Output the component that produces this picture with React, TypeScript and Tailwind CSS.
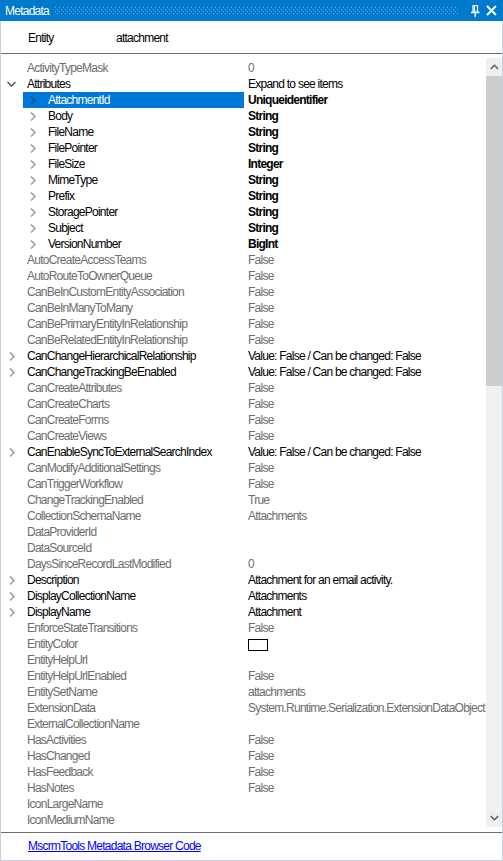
type Kind = "gray" | "exp" | "child";

interface Row {
  name: string;
  value?: string;
  kind: Kind;
  expanded?: boolean;
  selected?: boolean;
  swatch?: boolean;
}

const rows: Row[] = [
  { name: "ActivityTypeMask", value: "0", kind: "gray" },
  { name: "Attributes", value: "Expand to see items", kind: "exp", expanded: true },
  { name: "AttachmentId", value: "Uniqueidentifier", kind: "child", selected: true },
  { name: "Body", value: "String", kind: "child" },
  { name: "FileName", value: "String", kind: "child" },
  { name: "FilePointer", value: "String", kind: "child" },
  { name: "FileSize", value: "Integer", kind: "child" },
  { name: "MimeType", value: "String", kind: "child" },
  { name: "Prefix", value: "String", kind: "child" },
  { name: "StoragePointer", value: "String", kind: "child" },
  { name: "Subject", value: "String", kind: "child" },
  { name: "VersionNumber", value: "BigInt", kind: "child" },
  { name: "AutoCreateAccessTeams", value: "False", kind: "gray" },
  { name: "AutoRouteToOwnerQueue", value: "False", kind: "gray" },
  { name: "CanBeInCustomEntityAssociation", value: "False", kind: "gray" },
  { name: "CanBeInManyToMany", value: "False", kind: "gray" },
  { name: "CanBePrimaryEntityInRelationship", value: "False", kind: "gray" },
  { name: "CanBeRelatedEntityInRelationship", value: "False", kind: "gray" },
  { name: "CanChangeHierarchicalRelationship", value: "Value: False / Can be changed: False", kind: "exp" },
  { name: "CanChangeTrackingBeEnabled", value: "Value: False / Can be changed: False", kind: "exp" },
  { name: "CanCreateAttributes", value: "False", kind: "gray" },
  { name: "CanCreateCharts", value: "False", kind: "gray" },
  { name: "CanCreateForms", value: "False", kind: "gray" },
  { name: "CanCreateViews", value: "False", kind: "gray" },
  { name: "CanEnableSyncToExternalSearchIndex", value: "Value: False / Can be changed: False", kind: "exp" },
  { name: "CanModifyAdditionalSettings", value: "False", kind: "gray" },
  { name: "CanTriggerWorkflow", value: "False", kind: "gray" },
  { name: "ChangeTrackingEnabled", value: "True", kind: "gray" },
  { name: "CollectionSchemaName", value: "Attachments", kind: "gray" },
  { name: "DataProviderId", kind: "gray" },
  { name: "DataSourceId", kind: "gray" },
  { name: "DaysSinceRecordLastModified", value: "0", kind: "gray" },
  { name: "Description", value: "Attachment for an email activity.", kind: "exp" },
  { name: "DisplayCollectionName", value: "Attachments", kind: "exp" },
  { name: "DisplayName", value: "Attachment", kind: "exp" },
  { name: "EnforceStateTransitions", value: "False", kind: "gray" },
  { name: "EntityColor", kind: "gray", swatch: true },
  { name: "EntityHelpUrl", kind: "gray" },
  { name: "EntityHelpUrlEnabled", value: "False", kind: "gray" },
  { name: "EntitySetName", value: "attachments", kind: "gray" },
  { name: "ExtensionData", value: "System.Runtime.Serialization.ExtensionDataObject", kind: "gray" },
  { name: "ExternalCollectionName", kind: "gray" },
  { name: "HasActivities", value: "False", kind: "gray" },
  { name: "HasChanged", value: "False", kind: "gray" },
  { name: "HasFeedback", value: "False", kind: "gray" },
  { name: "HasNotes", value: "False", kind: "gray" },
  { name: "IconLargeName", kind: "gray" },
  { name: "IconMediumName", kind: "gray" },
];

function ChevronRight({ selected }: { selected?: boolean }) {
  return (
    <svg width="6" height="9" viewBox="0 0 6 9">
      <path d="M1 0.5 L5 4.5 L1 8.5" fill="none" stroke={selected ? "#1f4f80" : "#9a9a9a"} strokeWidth="1.5" />
    </svg>
  );
}

function ChevronDown() {
  return (
    <svg width="9" height="6" viewBox="0 0 9 6">
      <path d="M0.5 1 L4.5 5 L8.5 1" fill="none" stroke="#555555" strokeWidth="1.5" />
    </svg>
  );
}

function TreeRow({ row }: { row: Row }) {
  const child = row.kind === "child";
  const nameColor = row.selected ? "text-white" : row.kind === "gray" ? "text-[#6d6d6d]" : "text-black";
  const valueClass = child ? "font-bold text-black" : row.kind === "gray" ? "text-[#6d6d6d]" : "text-black";

  return (
    <div className="flex h-4 items-center whitespace-nowrap">
      <div className={`flex h-full w-[247px] shrink-0 ${child ? "pl-[22px]" : "pl-[1px]"}`}>
        <div className={`mr-[4px] flex h-full flex-1 items-center ${row.selected ? "bg-[#0078d7]" : ""}`}>
          <span className={`flex w-[25px] shrink-0 items-center ${row.expanded ? "pl-[5px]" : "pl-[7px]"}`}>
            {row.expanded ? <ChevronDown /> : row.kind !== "gray" ? <ChevronRight selected={row.selected} /> : null}
          </span>
          <span className={nameColor}>{row.name}</span>
        </div>
      </div>
      <div className={`flex items-center ${valueClass}`}>
        {row.swatch ? <span className="mt-[1px] block h-[12px] w-[20px] border border-black bg-white" /> : row.value}
      </div>
    </div>
  );
}

function Scrollbar() {
  return (
    <div className="flex w-[16px] shrink-0 flex-col pt-[4px] pb-[5px]">
      <div className="flex h-[18px] items-center justify-center bg-[#f0f0f0]">
        <svg width="9" height="6" viewBox="0 0 9 6">
          <path d="M0.8 5 L4.5 1.3 L8.2 5" fill="none" stroke="#606060" strokeWidth="1.6" />
        </svg>
      </div>
      <div className="h-[310px] bg-[#cdcdcd]" />
      <div className="flex-1 bg-[#f0f0f0]" />
      <div className="flex h-[18px] items-center justify-center bg-[#f0f0f0]">
        <svg width="9" height="6" viewBox="0 0 9 6">
          <path d="M0.8 1 L4.5 4.7 L8.2 1" fill="none" stroke="#606060" strokeWidth="1.6" />
        </svg>
      </div>
    </div>
  );
}

export default function App() {
  return (
    <div className="flex h-[861px] w-[503px] flex-col bg-white font-['Liberation_Sans',Arial,sans-serif] text-[12px] tracking-[-0.75px]">
      <div className="flex h-[21px] shrink-0 items-center bg-[#007acc] pl-[5px] pr-[6px] text-white">
        <span className="leading-none">Metadata</span>
        <svg className="ml-[6px] mr-[10px] h-[8px] flex-1" preserveAspectRatio="none">
          <defs>
            <pattern id="grip" width="4" height="4" patternUnits="userSpaceOnUse">
              <rect x="0" y="0" width="1" height="1" fill="#5aaae6" />
              <rect x="2" y="2" width="1" height="1" fill="#5aaae6" />
            </pattern>
          </defs>
          <rect width="100%" height="100%" fill="url(#grip)" />
        </svg>
        <svg width="12" height="12" viewBox="0 0 12 12" className="mr-[5px]">
          <path d="M4 0.5 H8.5 V7 H4 Z M5.5 0.5 V7" fill="none" stroke="#ffffff" strokeWidth="1.2" />
          <path d="M2 7.5 H10.5 M6.2 7.5 V12" stroke="#ffffff" strokeWidth="1.4" />
        </svg>
        <svg width="11" height="11" viewBox="0 0 11 11">
          <path d="M1 1 L10 10 M10 1 L1 10" stroke="#ffffff" strokeWidth="2" />
        </svg>
      </div>

      <div className="flex flex-1 flex-col border-x border-b border-[#cccedb]">
        <div className="grid h-[32px] shrink-0 grid-cols-[88px_1fr] items-center pt-[2px] pl-[27px] text-black">
          <div>Entity</div>
          <div>attachment</div>
        </div>
        <div className="h-px shrink-0 bg-[#6e6e6e]" />

        <div className="flex h-[778px] shrink-0">
          <div className="flex-1 overflow-hidden pt-[6px]">
            {rows.map((r) => (
              <TreeRow key={r.name} row={r} />
            ))}
          </div>
          <Scrollbar />
        </div>

        <div className="h-px shrink-0 bg-[#6e6e6e]" />
        <div className="flex flex-1 items-center pb-[1px] pl-[27px]">
          <a href="#" className="text-[#0000ff] underline">
            MscrmTools Metadata Browser Code
          </a>
        </div>
      </div>
    </div>
  );
}
